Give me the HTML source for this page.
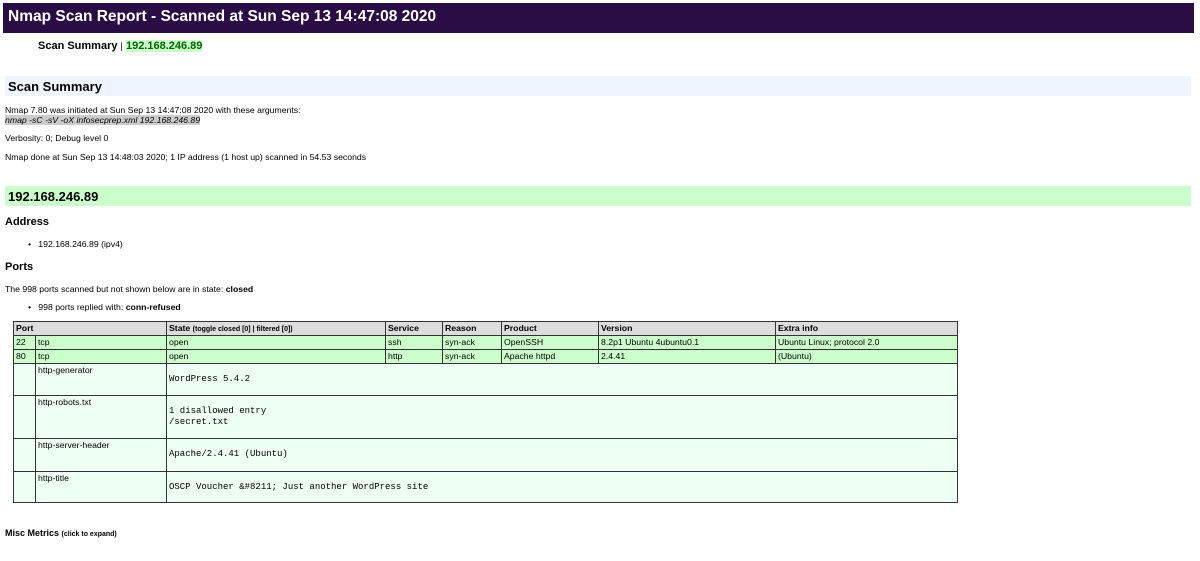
<!DOCTYPE html>
<html><head><meta charset="utf-8"><style>
body{margin:0;width:1200px;height:561px;background:#fff;font-family:"Liberation Sans",sans-serif;color:#000;position:relative;overflow:hidden}
.a{position:absolute;white-space:nowrap}
.s{font-size:8.7px}
table{position:absolute;left:13px;top:321px;width:944px;border-collapse:collapse;border:1px solid #000;font-size:8.7px;table-layout:fixed}
td{border:1px solid #333;padding:1px 2px 0;vertical-align:top;overflow:hidden;white-space:nowrap}
tr.h td{background:#ddd;font-weight:bold;height:12px}
tr.g td{background:#ccffcc;height:12px}
tr.x td{background:#eefff4}
pre{font-family:"Liberation Mono",monospace;font-size:9px;margin:0;line-height:11px}
</style></head><body>
<div class="a" style="left:3px;top:3px;width:1191px;height:30px;background:#2a0d45"></div>
<div class="a" style="left:8px;top:8px;color:#fff;font-size:15.5px;font-weight:bold">Nmap Scan Report - Scanned at Sun Sep 13 14:47:08 2020</div>
<div class="a" style="left:38px;top:40px;font-size:11px;font-weight:bold">Scan Summary <span style="font-weight:normal;font-size:9px">|</span> <span style="background:#ccffcc;color:#006400">192.168.246.89</span></div>
<div class="a" style="left:5px;top:76px;width:1186px;height:20px;background:#eef5ff"></div>
<div class="a" style="left:8px;top:79px;font-size:13px;font-weight:bold">Scan Summary</div>
<div class="a s" style="left:5px;top:105px">Nmap 7.80 was initiated at Sun Sep 13 14:47:08 2020 with these arguments:</div>
<div class="a s" style="left:5px;top:115px;background:#ccc;font-style:italic">nmap -sC -sV -oX infosecprep.xml 192.168.246.89</div>
<div class="a s" style="left:5px;top:133px">Verbosity: 0; Debug level 0</div>
<div class="a s" style="left:5px;top:152px">Nmap done at Sun Sep 13 14:48:03 2020; 1 IP address (1 host up) scanned in 54.53 seconds</div>
<div class="a" style="left:5px;top:186px;width:1186px;height:20px;background:#ccffcc"></div>
<div class="a" style="left:8px;top:189px;font-size:13px;font-weight:bold">192.168.246.89</div>
<div class="a" style="left:5px;top:216px;font-size:11px;font-weight:bold">Address</div>
<div class="a s" style="left:28px;top:239px">•&nbsp;&nbsp;&nbsp;192.168.246.89 (ipv4)</div>
<div class="a" style="left:5px;top:261px;font-size:11px;font-weight:bold">Ports</div>
<div class="a s" style="left:5px;top:284px">The 998 ports scanned but not shown below are in state: <b>closed</b></div>
<div class="a s" style="left:28px;top:302px">•&nbsp;&nbsp;&nbsp;998 ports replied with: <b>conn-refused</b></div>
<table>
<colgroup><col style="width:22px"><col style="width:131px"><col style="width:219px"><col style="width:57px"><col style="width:59px"><col style="width:97px"><col style="width:177px"><col style="width:182px"></colgroup>
<tr class="h"><td colspan="2">Port</td><td>State <span style="font-size:7px">(toggle closed [0] | filtered [0])</span></td><td>Service</td><td>Reason</td><td>Product</td><td>Version</td><td>Extra info</td></tr>
<tr class="g"><td>22</td><td>tcp</td><td>open</td><td>ssh</td><td>syn-ack</td><td>OpenSSH</td><td>8.2p1 Ubuntu 4ubuntu0.1</td><td>Ubuntu Linux; protocol 2.0</td></tr>
<tr class="g"><td>80</td><td>tcp</td><td>open</td><td>http</td><td>syn-ack</td><td>Apache httpd</td><td>2.4.41</td><td>(Ubuntu)</td></tr>
<tr class="x" style="height:32px"><td></td><td>http-generator</td><td colspan="6"><pre style="margin-top:9px">WordPress 5.4.2</pre></td></tr>
<tr class="x" style="height:43px"><td></td><td>http-robots.txt</td><td colspan="6"><pre style="margin-top:9px">1 disallowed entry
/secret.txt</pre></td></tr>
<tr class="x" style="height:33px"><td></td><td>http-server-header</td><td colspan="6"><pre style="margin-top:9px">Apache/2.4.41 (Ubuntu)</pre></td></tr>
<tr class="x" style="height:31px"><td></td><td>http-title</td><td colspan="6"><pre style="margin-top:9px">OSCP Voucher &amp;#8211; Just another WordPress site</pre></td></tr>
</table>
<div class="a" style="left:5px;top:528px;font-size:9px;font-weight:bold">Misc Metrics <span style="font-size:7px">(click to expand)</span></div>
</body></html>
